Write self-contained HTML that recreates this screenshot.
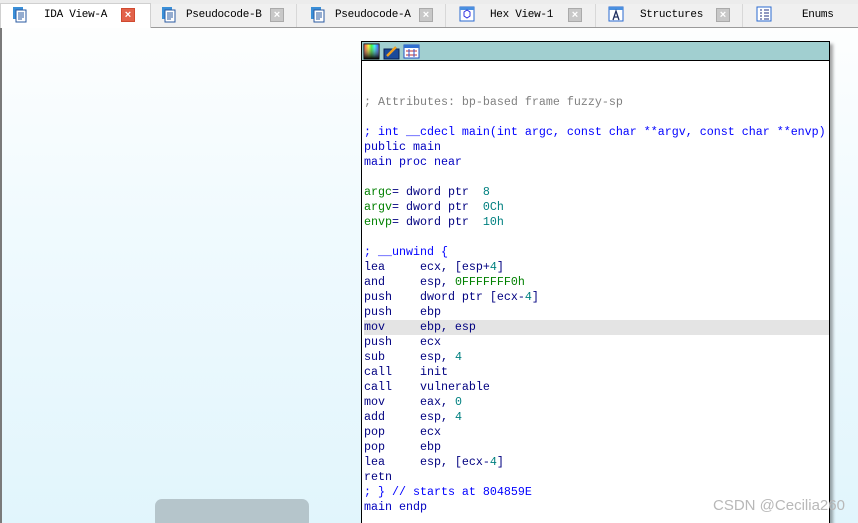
<!DOCTYPE html>
<html><head><meta charset="utf-8"><style>
*{margin:0;padding:0;box-sizing:border-box}
html,body{width:858px;height:523px;overflow:hidden}
body{position:relative;background:#fff;font-family:"Liberation Mono",monospace}
#bar{position:absolute;left:0;top:0;width:858px;height:28px;background:#ececec;border-bottom:2px solid #9a9a9a}
.tab{position:absolute;top:4px;height:23px;background:#f0f0f0;border-right:1px solid #d8d8d8}
.tab.act{top:3px;height:25px;background:#fff;border:1px solid #d0d0d0;border-bottom:none}
.tab span{position:absolute;top:5px;font-size:11px;color:#000;letter-spacing:-0.3px}
.ic{position:absolute;top:2px;width:16px;height:17px}
.x{position:absolute;top:4px;width:14px;height:14px;background:#c8c8c8;border:1px solid #aaa;color:#fff;font:bold 11px/12px "Liberation Sans",sans-serif;text-align:center}
.x.r{background:#e2624a;border-color:#d04a30}
#main{position:absolute;left:0;top:28px;width:858px;height:495px;border-left:2px solid #7a7a7a;background:linear-gradient(#fdfefe,#f0fafe 40%,#e1f5fc)}
#pill{position:absolute;left:155px;top:499px;width:154px;height:30px;background:#b5c5cb;border-radius:7px}
#box{position:absolute;left:361px;top:41px;width:469px;height:483px;border:1px solid #000;border-bottom:none;background:#fff;box-shadow:3px 3px 3px rgba(0,0,0,.35);overflow:hidden}
#hdr{height:19px;background:#a1cfd0;border-bottom:1px solid #000;position:relative}
#code{position:absolute;left:2px;top:8px;font-size:11.67px;line-height:15px;white-space:pre;color:#0000c0}
.l{height:15px;width:465px}
.hl{background:#e4e4e4}
.g{color:#008000}.c{color:#808080}.n{color:#008080}.b{color:#000080}.bl{color:#0000ff}
#wm{position:absolute;left:713px;top:497px;font:15px "Liberation Sans",sans-serif;color:#b8b8b8}
</style></head><body>
<div id="bar">
 <div class="tab act" style="left:0;width:151px">
  <svg class="ic" style="left:11px" viewBox="0 0 16 17"><rect x="1" y="1" width="10" height="12" fill="#3a8fd8"/><rect x="4" y="4" width="10" height="12" fill="#fff" stroke="#2a5aa0"/><path d="M6 7h6M6 9h6M6 11h6M6 13h4" stroke="#2a5aa0"/></svg>
  <span style="left:43px">IDA View-A</span><div class="x r" style="left:120px">×</div></div>
 <div class="tab" style="left:151px;width:146px">
  <svg class="ic" style="left:10px" viewBox="0 0 16 17"><rect x="1" y="1" width="10" height="12" fill="#3a8fd8"/><rect x="4" y="4" width="10" height="12" fill="#fff" stroke="#2a5aa0"/><path d="M6 7h6M6 9h6M6 11h6M6 13h4" stroke="#2a5aa0"/></svg>
  <span style="left:35px">Pseudocode-B</span><div class="x" style="left:119px">×</div></div>
 <div class="tab" style="left:297px;width:149px">
  <svg class="ic" style="left:13px" viewBox="0 0 16 17"><rect x="1" y="1" width="10" height="12" fill="#3a8fd8"/><rect x="4" y="4" width="10" height="12" fill="#fff" stroke="#2a5aa0"/><path d="M6 7h6M6 9h6M6 11h6M6 13h4" stroke="#2a5aa0"/></svg>
  <span style="left:38px">Pseudocode-A</span><div class="x" style="left:122px">×</div></div>
 <div class="tab" style="left:446px;width:150px">
  <svg class="ic" style="left:13px" viewBox="0 0 16 17"><rect x="1" y="1" width="14" height="14" fill="#fff" stroke="#2a6ad0"/><rect x="1" y="1" width="14" height="3" fill="#4a90e0"/><path d="M5 6l3-2 3 2v4l-3 2-3-2z" fill="none" stroke="#3030e0"/></svg>
  <span style="left:44px">Hex View-1</span><div class="x" style="left:122px">×</div></div>
 <div class="tab" style="left:596px;width:147px">
  <svg class="ic" style="left:12px" viewBox="0 0 16 17"><rect x="1" y="1" width="14" height="14" fill="#fff" stroke="#2a6ad0"/><rect x="1" y="1" width="14" height="3" fill="#4a90e0"/><path d="M5 14l3-9 3 9M6 11h4" fill="none" stroke="#203060" stroke-width="1.3"/></svg>
  <span style="left:44px">Structures</span><div class="x" style="left:120px">×</div></div>
 <div class="tab" style="left:743px;width:115px;border:none">
  <svg class="ic" style="left:13px" viewBox="0 0 16 17"><rect x="1" y="1" width="14" height="14" fill="#fff" stroke="#2a6ad0"/><path d="M4 4h2M4 7h2M4 10h2M4 13h2M8 4h5M8 7h5M8 10h5M8 13h5" stroke="#203080"/></svg>
  <span style="left:59px">Enums</span></div>
</div>
<div id="main"></div>
<div id="pill"></div>
<div id="box">
 <div id="hdr">
  <svg style="position:absolute;left:1px;top:1px" width="60" height="17" viewBox="0 0 60 17">
   <defs><linearGradient id="rb" x1="0" x2="1"><stop offset="0" stop-color="#f00"/><stop offset=".3" stop-color="#ff0"/><stop offset=".5" stop-color="#0f0"/><stop offset=".7" stop-color="#0ff"/><stop offset="1" stop-color="#00f"/></linearGradient><linearGradient id="dk" x1="0" y1="0" x2="0" y2="1"><stop offset="0" stop-color="#fff" stop-opacity=".2"/><stop offset="1" stop-color="#000"/></linearGradient></defs>
   <rect x="1" y="1" width="15" height="15" fill="url(#rb)" stroke="#000"/><rect x="1" y="1" width="15" height="15" fill="url(#dk)"/>
   <rect x="21" y="6" width="15" height="10" fill="#1a4a9a" stroke="#0a2050"/><path d="M24 13l9-9" stroke="#f0a020" stroke-width="2.5"/>
   <rect x="41" y="2" width="15" height="13" fill="#fff" stroke="#2050c0"/><rect x="41" y="2" width="15" height="3" fill="#3070d0"/><path d="M43 8h11M43 12h11" stroke="#c03030"/><path d="M46 6v8M51 6v8" stroke="#3050d0"/>
  </svg>
 </div>
 <div id="code">
<div class="l"> </div><div class="l"> </div><div class="l c">; Attributes: bp-based frame fuzzy-sp</div><div class="l"> </div><div class="l bl">; int __cdecl main(int argc, const char **argv, const char **envp)</div><div class="l">public main</div><div class="l">main proc near</div><div class="l"> </div><div class="l"><span class="g">argc</span><span class="b">= dword ptr  </span><span class="n">8</span></div><div class="l"><span class="g">argv</span><span class="b">= dword ptr  </span><span class="n">0Ch</span></div><div class="l"><span class="g">envp</span><span class="b">= dword ptr  </span><span class="n">10h</span></div><div class="l"> </div><div class="l bl">; __unwind {</div><div class="l b">lea     ecx, [esp+<span class="n">4</span>]</div><div class="l b">and     esp, <span class="g">0FFFFFFF0h</span></div><div class="l b">push    dword ptr [ecx-<span class="n">4</span>]</div><div class="l b">push    ebp</div><div class="l b hl">mov     ebp, esp</div><div class="l b">push    ecx</div><div class="l b">sub     esp, <span class="n">4</span></div><div class="l b">call    init</div><div class="l b">call    vulnerable</div><div class="l b">mov     eax, <span class="n">0</span></div><div class="l b">add     esp, <span class="n">4</span></div><div class="l b">pop     ecx</div><div class="l b">pop     ebp</div><div class="l b">lea     esp, [ecx-<span class="n">4</span>]</div><div class="l b">retn</div><div class="l bl">; } // starts at 804859E</div><div class="l">main endp</div>
 </div>
</div>
<div id="wm">CSDN @Cecilia260</div>
</body></html>
